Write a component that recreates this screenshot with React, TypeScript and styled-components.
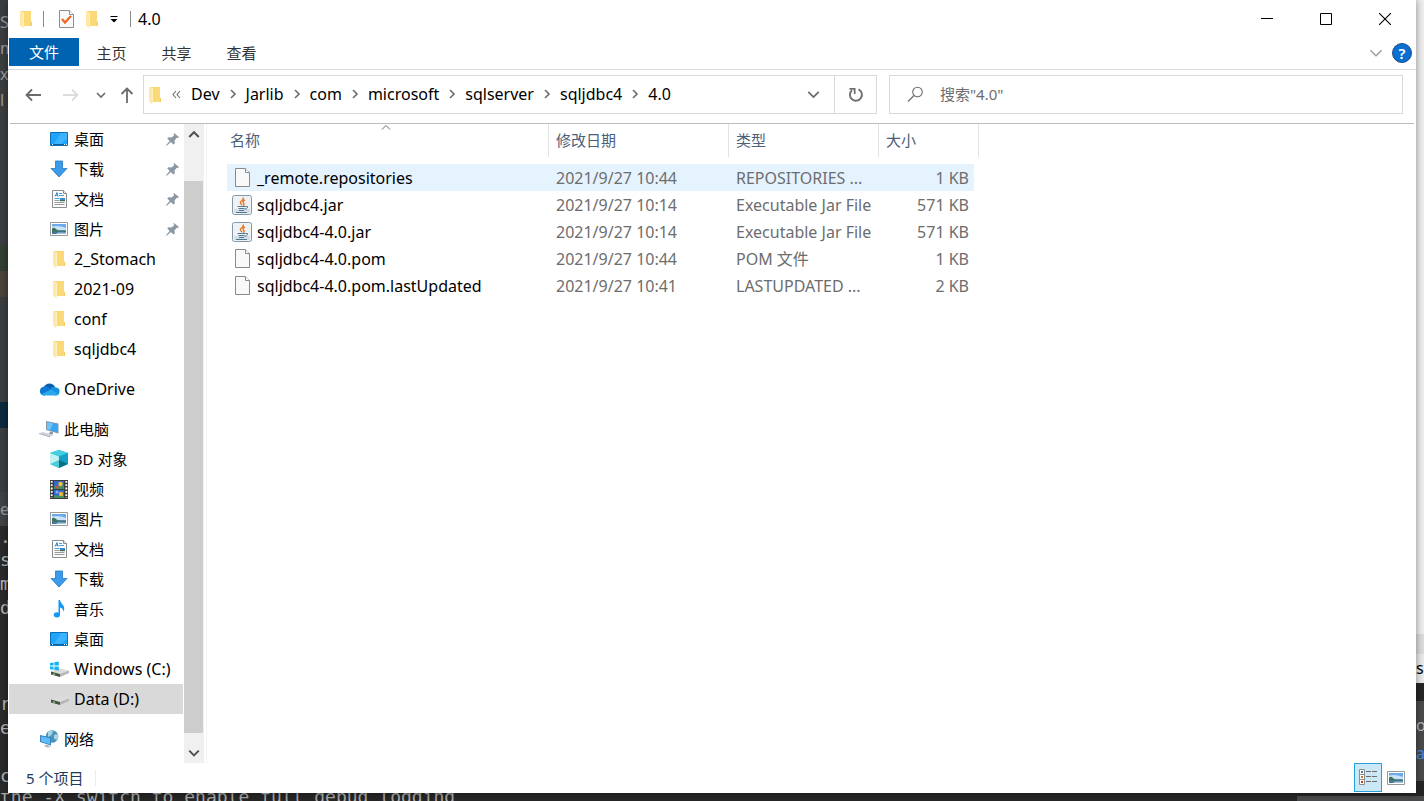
import React from "react";
import styled, { createGlobalStyle, css } from "styled-components";

const uiFont = `"Noto Sans", "Noto Sans CJK SC", sans-serif`;

const GlobalStyle = createGlobalStyle`
  * { box-sizing: border-box; }
  body { margin: 0; font: 15px/20px ${uiFont}; color: #000; background: #2b2b2b; }
  button { font: inherit; color: inherit; border: 0; padding: 0; margin: 0; background: none; text-align: left; }
  ul, ol { list-style: none; margin: 0; padding: 0; }
  svg { display: block; flex: none; }
`;

/* ---------- desktop behind the window ---------- */

const Desktop = styled.div`
  display: grid;
  grid-template-columns: 8px minmax(0, 1fr) 8px;
  grid-template-rows: 1fr 8px;
  min-height: 100vh;
`;

const Edge = styled.div`
  display: flex;
  flex-direction: column;
  overflow: hidden;
  min-width: 0;
`;

const EdgeBand = styled.div<{ $h?: number; $bg: string }>`
  background: ${(p) => p.$bg};
  ${(p) => (p.$h ? css`height: ${p.$h}px; flex: none;` : css`flex: 1;`)}
`;

const EdgeText = styled.div<{ $h: number; $tone?: string; $mono?: boolean }>`
  height: ${(p) => p.$h}px;
  line-height: ${(p) => p.$h}px;
  color: ${(p) => p.$tone ?? "#9a9c9e"};
  font-size: 16px;
  white-space: nowrap;
  ${(p) => p.$mono && css`font-family: "DejaVu Sans Mono", monospace; font-size: 18px; color: #b4b6b8;`}
`;

const BottomEdge = styled.div`
  grid-column: 1 / -1;
  display: flex;
  justify-content: space-between;
  align-items: flex-end;
  height: 8px;
  overflow: hidden;
  background: #262626;
`;

const ConsoleLine = styled.span`
  font: 18px/20px "DejaVu Sans Mono", monospace;
  height: 14px;
  color: #a9abad;
  white-space: pre;
`;

const BottomPanel = styled.span`
  width: 127px;
  height: 5px;
  background: #4a4b4d;
`;

/* ---------- window ---------- */

const Window = styled.main`
  display: flex;
  flex-direction: column;
  background: #fff;
  box-shadow: 0 0 8px rgba(0, 0, 0, 0.45);
  z-index: 1;
`;

const TitleBar = styled.header`
  display: flex;
  align-items: center;
  height: 38px;
  padding: 0 2px 0 12px;
`;

const QuickAccess = styled.div`
  display: flex;
  align-items: center;
`;

const QuickItem = styled.button<{ $w: number }>`
  display: flex;
  justify-content: center;
  align-items: center;
  width: ${(p) => p.$w}px;
  height: 24px;
`;

const ThinRule = styled.span<{ $tone?: string }>`
  width: 1px;
  height: 16px;
  background: ${(p) => p.$tone ?? "#8a8a8a"};
`;

const Title = styled.h1`
  flex: 1;
  margin: 0;
  font-size: 16px;
  font-weight: 400;
`;

const CaptionButton = styled.button`
  display: flex;
  justify-content: center;
  align-items: center;
  width: 59px;
  height: 38px;
`;

const Ribbon = styled.nav`
  display: flex;
  align-items: flex-start;
  height: 32px;
  padding: 0 4px 0 1px;
  border-bottom: 1px solid #dadbdc;
`;

const RibbonTab = styled.button<{ $primary?: boolean }>`
  width: 65px;
  height: 30px;
  text-align: center;
  color: #333;
  ${(p) => p.$primary && css`width: 70px; height: 28px; background: #0063b1; color: #fff;`}
`;

const RibbonTools = styled.div`
  display: flex;
  align-items: center;
  gap: 9px;
  height: 30px;
  margin-left: auto;
`;

const HelpButton = styled.button`
  width: 20px;
  height: 20px;
  border-radius: 50%;
  border: 1px solid #1b4f86;
  background: #0a6fd0;
  color: #fff;
  font-weight: 600;
  line-height: 18px;
  text-align: center;
`;

const AddressRow = styled.div`
  display: flex;
  align-items: center;
  height: 54px;
  margin: 0 2px;
  padding: 0 11px 4px 0;
  border-bottom: 1px solid #bdbdbd;
`;

const NavButtons = styled.div`
  display: flex;
  align-items: center;
  width: 133px;
  padding-left: 4px;
`;

const NavButton = styled.button<{ $w: number }>`
  display: flex;
  justify-content: center;
  width: ${(p) => p.$w}px;
`;

const AddressBox = styled.div`
  display: flex;
  align-items: center;
  flex: 1 1 734px;
  height: 39px;
  border: 1px solid #d9d9d9;
  padding-left: 5px;
`;

const Crumbs = styled.ol`
  display: flex;
  align-items: center;
  flex: 1;
  padding-bottom: 2px;
  font-size: 16px;
  white-space: nowrap;
`;

const Crumb = styled.li`
  display: flex;
  align-items: center;
`;

const CrumbArrow = styled.span<{ $w?: number }>`
  display: flex;
  justify-content: center;
  width: ${(p) => p.$w ?? 26}px;
`;

const AddressButton = styled.button<{ $ruled?: boolean }>`
  display: flex;
  justify-content: center;
  align-items: center;
  width: 42px;
  height: 37px;
  ${(p) => p.$ruled && css`border-left: 1px solid #d9d9d9;`}
`;

const SearchBox = styled.label`
  display: flex;
  align-items: center;
  gap: 16px;
  flex: 1 1 514px;
  height: 39px;
  margin-left: 12px;
  padding-left: 17px;
  border: 1px solid #d9d9d9;
`;

const SearchInput = styled.input`
  flex: 1;
  min-width: 0;
  border: 0;
  padding: 0 0 2px;
  outline: 0;
  font: inherit;
  background: none;
  &::placeholder { color: #6d6d6d; opacity: 1; }
`;

/* ---------- body ---------- */

const Body = styled.div`
  display: flex;
  flex: 1;
`;

const Sidebar = styled.nav`
  width: 176px;
  padding: 0 1px 9px;
`;

const Group = styled.ul`
  & + & { margin-top: 10px; }
`;

const TreeItem = styled.button<{ $root?: boolean; $selected?: boolean }>`
  display: flex;
  align-items: center;
  width: 100%;
  height: 30px;
  padding-left: ${(p) => (p.$root ? 29 : 39)}px;
  padding-right: 4px;
  background: ${(p) => (p.$selected ? "#d9d9d9" : "none")};
`;

const TreeIcon = styled.span`
  display: flex;
  justify-content: center;
  align-items: center;
  width: 22px;
  height: 22px;
  margin-right: 4px;
`;

const TreeLabel = styled.span<{ $latin: boolean }>`
  flex: 1;
  font-size: ${(p) => (p.$latin ? 16 : 15)}px;
  white-space: nowrap;
`;

const ScrollBar = styled.div`
  display: flex;
  flex-direction: column;
  width: 20px;
  background: #f0f0f0;
`;

const ScrollButton = styled.button`
  display: flex;
  justify-content: center;
  align-items: center;
  height: 20px;
`;

const ScrollTrack = styled.div`
  flex: 1;
  display: flex;
  padding: 37px 1px 10px 0;
`;

const ScrollThumb = styled.div`
  flex: 1;
  background: #cdcdcd;
`;

const Listing = styled.section`
  flex: 1;
  margin-left: 2px;
  padding-left: 20px;
  border-left: 1px solid #f3f3f3;
`;

const FileTable = styled.table`
  table-layout: fixed;
  width: 752px;
  border-spacing: 0;
`;

const HeadCell = styled.th<{ $w: number }>`
  position: relative;
  width: ${(p) => p.$w}px;
  height: 40px;
  padding: 0 0 7px;
  font-weight: 400;
  text-align: left;
  color: #4c607a;
`;

const HeadLabel = styled.div<{ $first?: boolean }>`
  height: 33px;
  line-height: 33px;
  padding-left: ${(p) => (p.$first ? 3 : 7)}px;
  border-right: 1px solid #e2e2e2;
`;

const SortMark = styled.span`
  position: absolute;
  top: -2px;
  left: 50%;
  margin-left: -7px;
`;

const FileRow = styled.tr<{ $hot?: boolean }>`
  height: 27px;
  font-size: 16px;
  td { background: ${(p) => (p.$hot ? "#e5f3ff" : "none")} padding-box; }
`;

const Cell = styled.td<{ $right?: boolean }>`
  padding: 0 5px 0 7px;
  overflow: hidden;
  white-space: nowrap;
  color: #6d6d6d;
  ${(p) => p.$right && css`text-align: right; border-right: 5px solid transparent;`}
`;

const NameCell = styled.td`
  padding: 0 0 0 5px;
`;

const NameLine = styled.div`
  display: flex;
  align-items: center;
  gap: 5px;
`;

const FileIcon = styled.span`
  display: flex;
  justify-content: center;
  width: 20px;
`;

const StatusBar = styled.footer`
  display: flex;
  align-items: center;
  height: 30px;
  padding: 0 6px 1px 18px;
  color: #1e395b;
`;

const StatusText = styled.span`
  padding-right: 12px;
`;

const ViewButtons = styled.div`
  display: flex;
  margin-left: auto;
`;

const ViewButton = styled.button<{ $active?: boolean }>`
  display: flex;
  justify-content: center;
  align-items: center;
  width: 28px;
  height: 29px;
  ${(p) => p.$active && css`background: #cce8f6; border: 1px solid #26a0da;`}
`;

/* ---------- icons ---------- */

const FolderIcon = () => (
  <svg width="12" height="18" viewBox="0 0 12 18">
    <path d="M2 1h9v10.500l1 .500v4H3z" fill="#f3cb62" />
    <path d="M4 1h7v15H4z" fill="#f9d978" />
    <path d="M0 1h1.500L4 2.500v13L3 18 0 15.500z" fill="#ffe8a6" />
    <path d="M3 2.200l1 .500v13L3 18z" fill="#fff0c2" />
  </svg>
);

const CheckDocIcon = () => (
  <svg width="15" height="18" viewBox="0 0 15 18">
    <path d="M.5.500h10l4 4v13H.5z" fill="#f6f9fb" stroke="#8f8f8f" />
    <path d="M10.500.500v4h4" fill="#fff" stroke="#8f8f8f" />
    <path d="M3 9l3 3.500L12 6" fill="none" stroke="#f0651f" strokeWidth="2.200" />
  </svg>
);

const CustomizeIcon = () => (
  <svg width="8" height="8" viewBox="0 0 8 8">
    <path d="M.5 1.500h7" stroke="#000" />
    <path d="M.5 4h7L4 7.500z" fill="#000" />
  </svg>
);

const Chevron = ({ dir, size = 10, tone = "#6b6b6b", weight = 1.6 }: { dir: "up" | "down" | "right"; size?: number; tone?: string; weight?: number }) => {
  const d = { up: "M1 7.500 5 3.500 9 7.500", down: "M1 3 5 7 9 3", right: "M3 1 7 5 3 9" }[dir];
  return (
    <svg width={size} height={size} viewBox="0 0 10 10">
      <path d={d} fill="none" stroke={tone} strokeWidth={(weight * 10) / size} />
    </svg>
  );
};

const ArrowIcon = ({ dir, tone = "#6b6b6b" }: { dir: "left" | "right" | "up"; tone?: string }) => {
  const turn = { left: 0, up: 90, right: 180 }[dir];
  return (
    <svg width="16" height="16" viewBox="0 0 16 16">
      <path d="M16 8H1.500M7 2.500 1.500 8 7 13.500" fill="none" stroke={tone} strokeWidth="1.800" transform={`rotate(${turn} 8 8)`} />
    </svg>
  );
};

const EllipsisChevrons = () => (
  <svg width="9" height="9" viewBox="0 0 9 9">
    <path d="M4 1 1 4.500 4 8M8 1 5 4.500 8 8" fill="none" stroke="#6b6b6b" strokeWidth="1.100" />
  </svg>
);

const RefreshIcon = () => (
  <svg width="16" height="16" viewBox="0 0 16 16">
    <path d="M10.500 2.300A6 6 0 1 1 4 3.200" fill="none" stroke="#6f6f6f" strokeWidth="1.900" />
    <path d="M1.500 1.800h5.200V7" fill="none" stroke="#6f6f6f" strokeWidth="1.700" />
  </svg>
);

const SearchIcon = () => (
  <svg width="17" height="17" viewBox="0 0 17 17">
    <circle cx="10.500" cy="6" r="4.800" fill="none" stroke="#6d6d6d" strokeWidth="1.100" />
    <path d="M7 9.500 1 15.500" stroke="#6d6d6d" strokeWidth="1.200" />
  </svg>
);

const MinimizeIcon = () => (
  <svg width="12" height="12" viewBox="0 0 12 12"><path d="M0 5.500h12" stroke="#000" /></svg>
);
const MaximizeIcon = () => (
  <svg width="12" height="12" viewBox="0 0 12 12"><path d="M.5.500h11v11H.5z" fill="none" stroke="#000" /></svg>
);
const CloseIcon = () => (
  <svg width="12" height="12" viewBox="0 0 12 12"><path d="M0 0l12 12M12 0 0 12" stroke="#000" strokeWidth="1.100" /></svg>
);

const DesktopIcon = () => (
  <svg width="18" height="14" viewBox="0 0 18 14">
    <path d="M.5.500h17v13H.5z" fill="#1ea4fb" stroke="#0f6fb5" />
    <path d="M11 1h6v6l-6 5H4z" fill="#3db2ff" />
    <path d="M1 12.500h16" stroke="#0a62a6" />
    <path d="M2 12.500h1M14 12.500h1M16 12.500h1" stroke="#fff" />
  </svg>
);

const DownloadIcon = () => (
  <svg width="18" height="18" viewBox="0 0 18 18">
    <path d="M5.500 1h7v7.500h4.500L9 17 1 8.500h4.500z" fill="#3a9bea" stroke="#2a77c0" strokeWidth=".8" />
  </svg>
);

const DocumentIcon = () => (
  <svg width="15" height="18" viewBox="0 0 15 18">
    <path d="M.5.500h11l3 3v14H.5z" fill="#fdfdfd" stroke="#8c8c8c" />
    <path d="M11.500.500v3h3" fill="#e8e8e8" stroke="#8c8c8c" />
    <path d="M3 6.500 5 2.500l1 4M4 5.200h2" fill="none" stroke="#2b87d1" />
    <path d="M7 3.500h3M7 5.500h5M2.500 8.500h5" stroke="#4b9fdc" />
    <path d="M2.500 10.500h5M2.500 12.500h10M2.500 14.500h10" stroke="#9a9a9a" />
    <path d="M8 8h5v3H8z" fill="#3d8cc9" />
    <path d="M8 10h5v1.200H8z" fill="#3c6b50" />
  </svg>
);

const PictureIcon = () => (
  <svg width="18" height="14" viewBox="0 0 18 14">
    <path d="M.5.500h17v13H.5z" fill="#fff" stroke="#999" />
    <path d="M2 2h14v10H2z" fill="#6aa9ea" />
    <path d="M2 4.500Q9 3 16 6v2H2z" fill="#c9e3fa" />
    <path d="M2 6.500q2-1.500 4 .500t5 1.500h5V10H2z" fill="#3f7358" />
    <path d="M2 9.500h14V12H2z" fill="#4778a0" />
    <path d="M8 10.500h8V12H6z" fill="#a3c3d9" />
  </svg>
);

const CloudIcon = () => (
  <svg width="21" height="14" viewBox="0 0 21 14">
    <path d="M5 5a6 6 0 0 1 11 0l-3 3z" fill="#0a5fb4" />
    <path d="M4.500 13.500A4.500 4.500 0 0 1 4.500 4.700Q7 3.500 9.500 5.500l4 3-8 5z" fill="#0d78d4" />
    <path d="M11.500 6.500Q14 3.500 17 5.500a4 4 0 0 1-1 8z" fill="#1490df" />
    <path d="M2 12.500 12 7.500l7.500 4.500q-1 1.500-3 1.500H4.500Q3 13.500 2 12.500z" fill="#28a8ea" />
  </svg>
);

const ComputerIcon = () => (
  <svg width="20" height="18" viewBox="0 0 20 18">
    <path d="M7 1l12.500 2.500v10L7 10z" fill="#8196a8" />
    <path d="M8 2.200l10.500 2.100v8L8 9.300z" fill="#3aa5f3" />
    <path d="M8 2.200l6 1.200-3 6.700-3-.800z" fill="#73c2fa" />
    <path d="M11 11.500l3 .800v2.200l-4-.500z" fill="#8d959b" />
    <path d="M0 13.500 3.500 12l11 2.500L11 17z" fill="#ccd2d8" />
    <path d="M0 13.500 11 17" stroke="#aab1b8" />
  </svg>
);

const CubeIcon = () => (
  <svg width="18" height="18" viewBox="0 0 18 18">
    <path d="M9 0l9 3v11l-9 4-9-4V3z" fill="#15a9c6" />
    <path d="M9 0l9 3-9 3.500L0 3z" fill="#42cde0" />
    <path d="M0 3l9 3.500V18l-9-4z" fill="#c2f1f3" />
    <path d="M0 14l9-4v8z" fill="#4bcbd7" />
    <path d="M18 3v11l-9-4V6.500z" fill="#14a0ca" />
    <path d="M9 10l9 4-9 4z" fill="#0c7280" />
  </svg>
);

const VideoIcon = () => (
  <svg width="18" height="19" viewBox="0 0 18 19">
    <path d="M0 0h18v19H0z" fill="#3c3c3c" />
    <path d="M4 1h10v8H4zM4 10h10v8H4z" fill="#3568c9" />
    <path d="M4 6h10v3H4zM4 15.500h10V18H4z" fill="#3f8f61" />
    <circle cx="10.500" cy="4" r="2.200" fill="#efc627" />
    <circle cx="7" cy="7" r="1.600" fill="#d1524c" />
    <circle cx="11" cy="14" r="2.200" fill="#efb53b" />
    <circle cx="7" cy="12" r="1.500" fill="#79b4f2" />
    <path d="M1.700 1v17M16.300 1v17" stroke="#fff" strokeWidth="1.800" strokeDasharray="1.800 1.500" />
  </svg>
);

const MusicIcon = () => (
  <svg width="12" height="18" viewBox="0 0 12 18">
    <path d="M5.500 0H7q.3 2.500 2.500 4.500 3 3 .800 7.500.3-3.500-3.300-4.500v7.500H5.500z" fill="#1597f5" />
    <ellipse cx="3.900" cy="14.800" rx="3.200" ry="2.600" fill="#1597f5" />
  </svg>
);

const DriveIcon = ({ system }: { system?: boolean }) => (
  <svg width="19" height={system ? 16 : 12} viewBox={system ? "0 0 19 16" : "0 4 19 12"}>
    <path d="M1 10.500 9 7.500l10 2-8 3.500z" fill="#dcdcdc" />
    <path d="M1 10.500l9 2.500v3l-9-2.500z" fill="#4c4f4c" />
    <path d="M10 13l9-3.500V12L10 16z" fill="#b4b6b8" />
    <path d="M3 13l2 .500" stroke="#4de04d" strokeWidth="1.300" />
    {system && (
      <path d="M0 2l3.600-.6v3.200H0zM4.400 1.300 8.800.600v4H4.400zM0 5.400h3.600v3.400L0 8.200zM4.400 5.400h4.400v4.200l-4.400-.700z" fill="#12b5f2" />
    )}
  </svg>
);

const NetworkIcon = () => (
  <svg width="19" height="18" viewBox="0 0 19 18">
    <circle cx="12" cy="6.500" r="6.300" fill="#4d94bd" />
    <path d="M8 2q3-2 5-.500L11.500 5 8 7zM14 5l3.500-1q1.500 3-.500 6l-3-1.500z" fill="#a9d4e6" />
    <path d="M0 5l11 2.500v8L0 12z" fill="#3583bf" />
    <path d="M1 6.200l9 2.100v6l-9-2.800z" fill="#5fbcf8" />
    <path d="M6 14.500l2 .500 3 2-4 .500-3-1.500z" fill="#b3bac0" />
  </svg>
);

const PinIcon = () => (
  <svg width="13" height="13" viewBox="0 0 13 13">
    <path d="M8 0l5 4-1.200 1-1-.3-2.300 2.800.3 3L7.500 11.500 4.800 9 .8 12.800 0 12.200 3.600 8 1.200 5.300 2.400 4.200l3 .2 2.800-2.200L7.500.800z" fill="#8c99a5" />
  </svg>
);

const PageIcon = () => (
  <svg width="15" height="19" viewBox="0 0 15 19">
    <path d="M.5.500h10l4 4v14H.5z" fill="#f9f9f9" stroke="#8a8a8a" />
    <path d="M10.500.500v4h4" fill="#fff" stroke="#8a8a8a" />
  </svg>
);

const JarIcon = () => (
  <svg width="20" height="20" viewBox="0 0 20 20">
    <rect x=".5" y=".5" width="19" height="19" rx="2" fill="#eef2f5" stroke="#7f98ab" />
    <path d="M2 14h16v4H2z" fill="#d7dfe5" />
    <path d="M11 2.500Q12 4.500 9.500 6T10 10M13 5q-3 1.500-1.500 3t-.500 2.500" fill="none" stroke="#e8792b" strokeWidth="1.400" />
    <path d="M5.500 11.500h8M6.500 13.500h6M7 15.500h5M4 17.500h11" stroke="#4d7896" strokeWidth="1.200" />
    <path d="M13.500 11.500q3-.500 2 1.200t-3 1.500" fill="none" stroke="#4d7896" />
  </svg>
);

const DetailsViewIcon = () => (
  <svg width="18" height="17" viewBox="0 0 18 17">
    {["#4686a8", "#c07a2f", "#d23a1e"].map((tone, i) => (
      <g key={tone} transform={`translate(0 ${i * 5})`}>
        <path d="M.5.500h5v5h-5z" fill="#fff" stroke="#8d8d8d" />
        <path d="M2 2h2v2H2z" fill={tone} />
        <path d="M7 2.500h5M13 2.500h5" stroke="#6b6b6b" />
      </g>
    ))}
  </svg>
);

/* ---------- data ---------- */

type TreeEntry = { label: string; icon: React.ReactNode; root?: boolean; pinned?: boolean; selected?: boolean };

const tree: TreeEntry[][] = [
  [
    { label: "桌面", icon: <DesktopIcon />, pinned: true },
    { label: "下载", icon: <DownloadIcon />, pinned: true },
    { label: "文档", icon: <DocumentIcon />, pinned: true },
    { label: "图片", icon: <PictureIcon />, pinned: true },
    { label: "2_Stomach", icon: <FolderIcon /> },
    { label: "2021-09", icon: <FolderIcon /> },
    { label: "conf", icon: <FolderIcon /> },
    { label: "sqljdbc4", icon: <FolderIcon /> },
  ],
  [{ label: "OneDrive", icon: <CloudIcon />, root: true }],
  [
    { label: "此电脑", icon: <ComputerIcon />, root: true },
    { label: "3D 对象", icon: <CubeIcon /> },
    { label: "视频", icon: <VideoIcon /> },
    { label: "图片", icon: <PictureIcon /> },
    { label: "文档", icon: <DocumentIcon /> },
    { label: "下载", icon: <DownloadIcon /> },
    { label: "音乐", icon: <MusicIcon /> },
    { label: "桌面", icon: <DesktopIcon /> },
    { label: "Windows (C:)", icon: <DriveIcon system /> },
    { label: "Data (D:)", icon: <DriveIcon />, selected: true },
  ],
  [{ label: "网络", icon: <NetworkIcon />, root: true }],
];

const isLatin = (text: string) => /^[\x20-\x7e]+$/.test(text);

const path = ["Dev", "Jarlib", "com", "microsoft", "sqlserver", "sqljdbc4", "4.0"];

const files = [
  { name: "_remote.repositories", date: "2021/9/27 10:44", type: "REPOSITORIES ...", size: "1 KB" },
  { name: "sqljdbc4.jar", date: "2021/9/27 10:14", type: "Executable Jar File", size: "571 KB", jar: true },
  { name: "sqljdbc4-4.0.jar", date: "2021/9/27 10:14", type: "Executable Jar File", size: "571 KB", jar: true },
  { name: "sqljdbc4-4.0.pom", date: "2021/9/27 10:44", type: "POM 文件", size: "1 KB" },
  { name: "sqljdbc4-4.0.pom.lastUpdated", date: "2021/9/27 10:41", type: "LASTUPDATED ...", size: "2 KB" },
];

export default function App() {
  return (
    <>
      <GlobalStyle />
      <Desktop>
        <Edge aria-hidden="true">
          <EdgeBand $h={245} $bg="#3c3f41">
            <EdgeText $h={9} />
            <EdgeText $h={26}>S</EdgeText>
            <EdgeText $h={26}>m</EdgeText>
            <EdgeText $h={26}>x</EdgeText>
            <EdgeText $h={26}>l</EdgeText>
          </EdgeBand>
          <EdgeBand $h={26} $bg="#344134" />
          <EdgeBand $h={26} $bg="#4b453b" />
          <EdgeBand $h={105} $bg="#3c3f41" />
          <EdgeBand $h={26} $bg="#0d293e" />
          <EdgeBand $h={64} $bg="#3c3f41" />
          <EdgeBand $h={34} $bg="#414446">
            <EdgeText $h={34}>e</EdgeText>
          </EdgeBand>
          <EdgeBand $bg="#2b2b2b">
            <EdgeText $h={22} $mono>.</EdgeText>
            <EdgeText $h={24} $mono>s</EdgeText>
            <EdgeText $h={24} $mono>m</EdgeText>
            <EdgeText $h={24} $mono>d</EdgeText>
            <EdgeText $h={72} />
            <EdgeText $h={24} $mono>r</EdgeText>
            <EdgeText $h={24} $mono>e</EdgeText>
            <EdgeText $h={24} />
            <EdgeText $h={24} $mono>c</EdgeText>
          </EdgeBand>
        </Edge>

        <Window>
          <TitleBar>
            <QuickAccess>
              <QuickItem $w={12} aria-label="窗口"><FolderIcon /></QuickItem>
              <QuickItem $w={23} as="span"><ThinRule /></QuickItem>
              <QuickItem $w={23} aria-label="属性"><CheckDocIcon /></QuickItem>
              <QuickItem $w={27} aria-label="新建文件夹"><FolderIcon /></QuickItem>
              <QuickItem $w={17} aria-label="自定义快速访问工具栏"><CustomizeIcon /></QuickItem>
              <QuickItem $w={16} as="span"><ThinRule /></QuickItem>
            </QuickAccess>
            <Title>4.0</Title>
            <CaptionButton aria-label="最小化"><MinimizeIcon /></CaptionButton>
            <CaptionButton aria-label="最大化"><MaximizeIcon /></CaptionButton>
            <CaptionButton aria-label="关闭"><CloseIcon /></CaptionButton>
          </TitleBar>

          <Ribbon>
            <RibbonTab $primary>文件</RibbonTab>
            <RibbonTab>主页</RibbonTab>
            <RibbonTab>共享</RibbonTab>
            <RibbonTab>查看</RibbonTab>
            <RibbonTools>
              <Chevron dir="down" size={14} tone="#9b9b9b" weight={1.3} />
              <HelpButton aria-label="帮助">?</HelpButton>
            </RibbonTools>
          </Ribbon>

          <AddressRow>
            <NavButtons>
              <NavButton $w={38} aria-label="返回"><ArrowIcon dir="left" /></NavButton>
              <NavButton $w={38} aria-label="前进"><ArrowIcon dir="right" tone="#dcdcdc" /></NavButton>
              <NavButton $w={22} aria-label="最近浏览的位置"><Chevron dir="down" /></NavButton>
              <NavButton $w={30} aria-label="上移"><ArrowIcon dir="up" /></NavButton>
            </NavButtons>
            <AddressBox>
              <FolderIcon />
              <CrumbArrow $w={30}><EllipsisChevrons /></CrumbArrow>
              <Crumbs>
                {path.map((part, i) => (
                  <Crumb key={part}>
                    {i > 0 && <CrumbArrow><Chevron dir="right" /></CrumbArrow>}
                    <button>{part}</button>
                  </Crumb>
                ))}
              </Crumbs>
              <AddressButton aria-label="以前的位置"><Chevron dir="down" size={13} weight={1.8} /></AddressButton>
              <AddressButton $ruled aria-label="刷新"><RefreshIcon /></AddressButton>
            </AddressBox>
            <SearchBox>
              <SearchIcon />
              <SearchInput type="text" aria-label="搜索" placeholder={'搜索"4.0"'} />
            </SearchBox>
          </AddressRow>

          <Body>
            <Sidebar>
              {tree.map((group) => (
                <Group key={group[0].label}>
                  {group.map((item) => (
                    <li key={item.label}>
                      <TreeItem $root={item.root} $selected={item.selected}>
                        <TreeIcon>{item.icon}</TreeIcon>
                        <TreeLabel $latin={isLatin(item.label)}>{item.label}</TreeLabel>
                        {item.pinned && <PinIcon />}
                      </TreeItem>
                    </li>
                  ))}
                </Group>
              ))}
            </Sidebar>
            <ScrollBar>
              <ScrollButton aria-label="向上滚动"><Chevron dir="up" size={12} tone="#505050" weight={2} /></ScrollButton>
              <ScrollTrack><ScrollThumb /></ScrollTrack>
              <ScrollButton aria-label="向下滚动"><Chevron dir="down" size={12} tone="#505050" weight={2} /></ScrollButton>
            </ScrollBar>
            <Listing>
              <FileTable>
                <thead>
                  <tr>
                    <HeadCell $w={322}>
                      <SortMark><Chevron dir="up" size={10} weight={1} /></SortMark>
                      <HeadLabel $first>名称</HeadLabel>
                    </HeadCell>
                    <HeadCell $w={180}><HeadLabel>修改日期</HeadLabel></HeadCell>
                    <HeadCell $w={150}><HeadLabel>类型</HeadLabel></HeadCell>
                    <HeadCell $w={100}><HeadLabel>大小</HeadLabel></HeadCell>
                  </tr>
                </thead>
                <tbody>
                  {files.map((f, i) => (
                    <FileRow key={f.name} $hot={i === 0}>
                      <NameCell>
                        <NameLine>
                          <FileIcon>{f.jar ? <JarIcon /> : <PageIcon />}</FileIcon>
                          {f.name}
                        </NameLine>
                      </NameCell>
                      <Cell>{f.date}</Cell>
                      <Cell>{f.type}</Cell>
                      <Cell $right>{f.size}</Cell>
                    </FileRow>
                  ))}
                </tbody>
              </FileTable>
            </Listing>
          </Body>

          <StatusBar>
            <StatusText>5 个项目</StatusText>
            <ThinRule $tone="#ececec" />
            <ViewButtons>
              <ViewButton $active aria-label="详细信息"><DetailsViewIcon /></ViewButton>
              <ViewButton aria-label="大图标"><PictureIcon /></ViewButton>
            </ViewButtons>
          </StatusBar>
        </Window>

        <Edge aria-hidden="true">
          <EdgeBand $h={634} $bg="#f0f0f0" />
          <EdgeBand $h={20} $bg="#dedede" />
          <EdgeBand $h={29} $bg="#ececec">
            <EdgeText $h={29} $tone="#000">s</EdgeText>
          </EdgeBand>
          <EdgeBand $h={18} $bg="#262626" />
          <EdgeBand $h={80} $bg="#4a4b4d">
            <EdgeText $h={10} />
            <EdgeText $h={28} $tone="#b8b8b8">oj</EdgeText>
            <EdgeText $h={28} $tone="#4a88d8">ar</EdgeText>
          </EdgeBand>
          <EdgeBand $bg="#262626" />
        </Edge>

        <BottomEdge aria-hidden="true">
          <ConsoleLine>the -X switch to enable full debug logging</ConsoleLine>
          <BottomPanel />
        </BottomEdge>
      </Desktop>
    </>
  );
}
